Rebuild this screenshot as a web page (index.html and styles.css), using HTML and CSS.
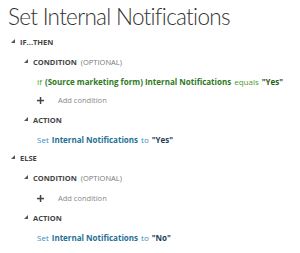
FILE: index.html
```html
<!DOCTYPE html>
<html>
<head>
  <title>Set Internal Notifications</title>
  <meta http-equiv="content-type" content="text/html; charset=utf-8" />
  <link rel="stylesheet" href="styles.css">
</head>
<body>
  <h1 class="title">Set Internal Notifications</h1>

  <div class="branch">
    <div class="head top"><span class="caret"></span><b>IF...THEN</b></div>
    <div class="branch-body">
      <div class="head"><span class="caret"></span><b>CONDITION</b><span class="opt">(OPTIONAL)</span></div>
      <div class="rule cond">If <b>(Source marketing form) Internal Notifications</b> equals <b class="val">"Yes"</b></div>
      <div class="add">
        <svg class="plus" width="7" height="7" viewBox="0 0 7 7"><rect x="2.8" y="0" width="1.5" height="7"/><rect x="0" y="2.8" width="7" height="1.5"/></svg>
        <span>Add condition</span>
      </div>
      <div class="head"><span class="caret"></span><b>ACTION</b></div>
      <div class="rule act">Set <b>Internal Notifications</b> to <b class="val">"Yes"</b></div>
    </div>
  </div>

  <div class="branch">
    <div class="head top"><span class="caret"></span><b>ELSE</b></div>
    <div class="branch-body">
      <div class="head"><span class="caret"></span><b>CONDITION</b><span class="opt">(OPTIONAL)</span></div>
      <div class="add">
        <svg class="plus" width="7" height="7" viewBox="0 0 7 7"><rect x="2.8" y="0" width="1.5" height="7"/><rect x="0" y="2.8" width="7" height="1.5"/></svg>
        <span>Add condition</span>
      </div>
      <div class="head"><span class="caret"></span><b>ACTION</b></div>
      <div class="rule act">Set <b>Internal Notifications</b> to <b class="val">"No"</b></div>
    </div>
  </div>
</body>
</html>
```

FILE: styles.css
```css
body {
  margin: 0;
  padding: 0 8px;
  background: #fff;
  font-family: "Open Sans", "Noto Sans", sans-serif;
  color: #444;
}
.title {
  margin: 0;
  height: 32px;
  line-height: 33px;
  font-family: "Lato", "Open Sans", sans-serif;
  font-size: 22.5px;
  font-weight: 300;
  letter-spacing: -0.7px;
  color: #333;
  white-space: nowrap;
}
.head {
  display: flex;
  align-items: center;
  height: 20px;
  font-size: 7.5px;
  padding-left: 16px;
}
.head.top {
  padding-left: 3px;
}
.head b {
  font-weight: 700;
  color: #444;
}
.caret {
  width: 0;
  height: 0;
  border-left: 4px solid transparent;
  border-bottom: 4px solid #555;
  margin-right: 5px;
  margin-top: -2px;
}
.opt {
  margin-left: 4px;
  color: #777;
}
.rule {
  display: flex;
  align-items: center;
  gap: 3px;
  height: 18px;
  padding-left: 29px;
  font-size: 8px;
  white-space: nowrap;
}
.cond {
  color: #4c9a2a;
}
.cond b {
  color: #2d7a1c;
}
.act {
  color: #3a8ac0;
}
.act b {
  color: #1f6f96;
}
.act b.val {
  color: #1d3f5e;
}
.cond b.val {
  color: #285c1a;
}
.add {
  display: flex;
  align-items: center;
  height: 20px;
  padding-left: 29px;
  font-size: 7.5px;
  color: #888;
}
.plus {
  fill: #444;
  margin-right: 14px;
}
```
